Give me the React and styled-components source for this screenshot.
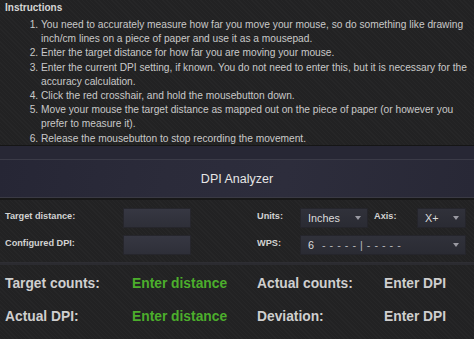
import React from "react";
import styled, { createGlobalStyle } from "styled-components";

const GlobalStyle = createGlobalStyle`
  html, body {
    margin: 0;
    padding: 0;
    background: #1f1f1f;
    font-family: "Liberation Sans", Arial, sans-serif;
  }
`;

const texture = `
  background-color: #222223;
  background-image: repeating-linear-gradient(
    45deg,
    rgba(255, 255, 255, 0.018) 0px,
    rgba(255, 255, 255, 0.018) 1px,
    transparent 1px,
    transparent 3px
  );
`;

const Page = styled.div`
  width: 474px;
  height: 339px;
  overflow: hidden;
  ${texture}
`;

const Instructions = styled.section`
  height: 146px;
  box-sizing: border-box;
  padding: 2px 3px 0 5px;
  border-bottom: 1px solid #151515;
  color: #c9c9c9;
`;

const InstrTitle = styled.div`
  font-size: 10px;
  font-weight: 700;
  line-height: 11px;
  color: #d6d6d6;
`;

const Steps = styled.ol`
  margin: 5px 0 0;
  padding: 0 0 0 36px;
  font-size: 10.2px;
  line-height: 14.2px;
`;

const Band = styled.div`
  height: 13px;
  background: #272735;
  border-bottom: 1px solid #3b3b48;
`;

const Header = styled.div`
  height: 37px;
  display: flex;
  align-items: center;
  justify-content: center;
  background: linear-gradient(100deg, #262635 0%, #2b2b3a 35%, #2d2d3c 60%, #282836 100%);
  border-bottom: 1px solid #3a3a44;
  box-shadow: 0 2px 0 #181818;
  color: #e6e6e6;
  font-size: 12.5px;
`;

const Form = styled.div`
  display: grid;
  grid-template-columns: 118px 68px 66px 43px 68px 49px 49px;
  grid-auto-rows: 20px;
  row-gap: 7px;
  align-items: center;
  padding: 10px 0 7px 5px;
  border-bottom: 1px solid #2e2e33;
`;

const Label = styled.span`
  font-size: 9.2px;
  font-weight: 700;
  color: #d2d2d2;
  padding-left: ${({ $indent }) => $indent || 0}px;
  align-self: start;
  padding-top: 3px;
`;

const Input = styled.div`
  height: 20px;
  box-sizing: border-box;
  background: linear-gradient(#363742, #2e2f38);
  border: 1px solid #26262c;
`;

const Select = styled.div`
  grid-column: ${({ $span }) => ($span ? `span ${$span}` : "auto")};
  height: 20px;
  box-sizing: border-box;
  display: flex;
  align-items: center;
  justify-content: space-between;
  padding: 0 6px 0 7px;
  background: linear-gradient(#30313a, #2a2b33);
  border: 1px solid #25252b;
  color: #dcdcdc;
  font-size: 10.8px;
`;

const Arrow = styled.span`
  width: 0;
  height: 0;
  border-left: 3px solid transparent;
  border-right: 3px solid transparent;
  border-top: 4px solid #9a9aa2;
`;

const Dashes = styled.span`
  margin-left: 8px;
  letter-spacing: 0.5px;
  color: #b8b8bc;
  flex: 1;
`;

const Results = styled.div`
  display: grid;
  grid-template-columns: 127px 125px 127px 1fr;
  grid-auto-rows: 33px;
  align-items: center;
  padding: 2px 0 0 5px;
  border-top: 2px solid #2b2b30;
`;

const ResultLabel = styled.span`
  font-size: 13.8px;
  font-weight: 700;
  color: ${({ $green }) => ($green ? "#4cae2c" : "#cfcfcf")};
`;

const steps = [
  "You need to accurately measure how far you move your mouse, so do something like drawing inch/cm lines on a piece of paper and use it as a mousepad.",
  "Enter the target distance for how far you are moving your mouse.",
  "Enter the current DPI setting, if known. You do not need to enter this, but it is necessary for the accuracy calculation.",
  "Click the red crosshair, and hold the mousebutton down.",
  "Move your mouse the target distance as mapped out on the piece of paper (or however you prefer to measure it).",
  "Release the mousebutton to stop recording the movement.",
];

export default function App() {
  return (
    <Page>
      <GlobalStyle />
      <Instructions>
        <InstrTitle>Instructions</InstrTitle>
        <Steps>
          {steps.map((s) => (
            <li key={s}>{s}</li>
          ))}
        </Steps>
      </Instructions>
      <Band />
      <Header>DPI Analyzer</Header>
      <Form>
        <Label>Target distance:</Label>
        <Input />
        <span />
        <Label>Units:</Label>
        <Select>
          Inches <Arrow />
        </Select>
        <Label $indent={6}>Axis:</Label>
        <Select>
          X+ <Arrow />
        </Select>

        <Label>Configured DPI:</Label>
        <Input />
        <span />
        <Label>WPS:</Label>
        <Select $span={3}>
          6<Dashes>- - - - - | - - - - -</Dashes>
          <Arrow />
        </Select>
      </Form>
      <Results>
        <ResultLabel>Target counts:</ResultLabel>
        <ResultLabel $green>Enter distance</ResultLabel>
        <ResultLabel>Actual counts:</ResultLabel>
        <ResultLabel>Enter DPI</ResultLabel>
        <ResultLabel>Actual DPI:</ResultLabel>
        <ResultLabel $green>Enter distance</ResultLabel>
        <ResultLabel>Deviation:</ResultLabel>
        <ResultLabel>Enter DPI</ResultLabel>
      </Results>
    </Page>
  );
}
